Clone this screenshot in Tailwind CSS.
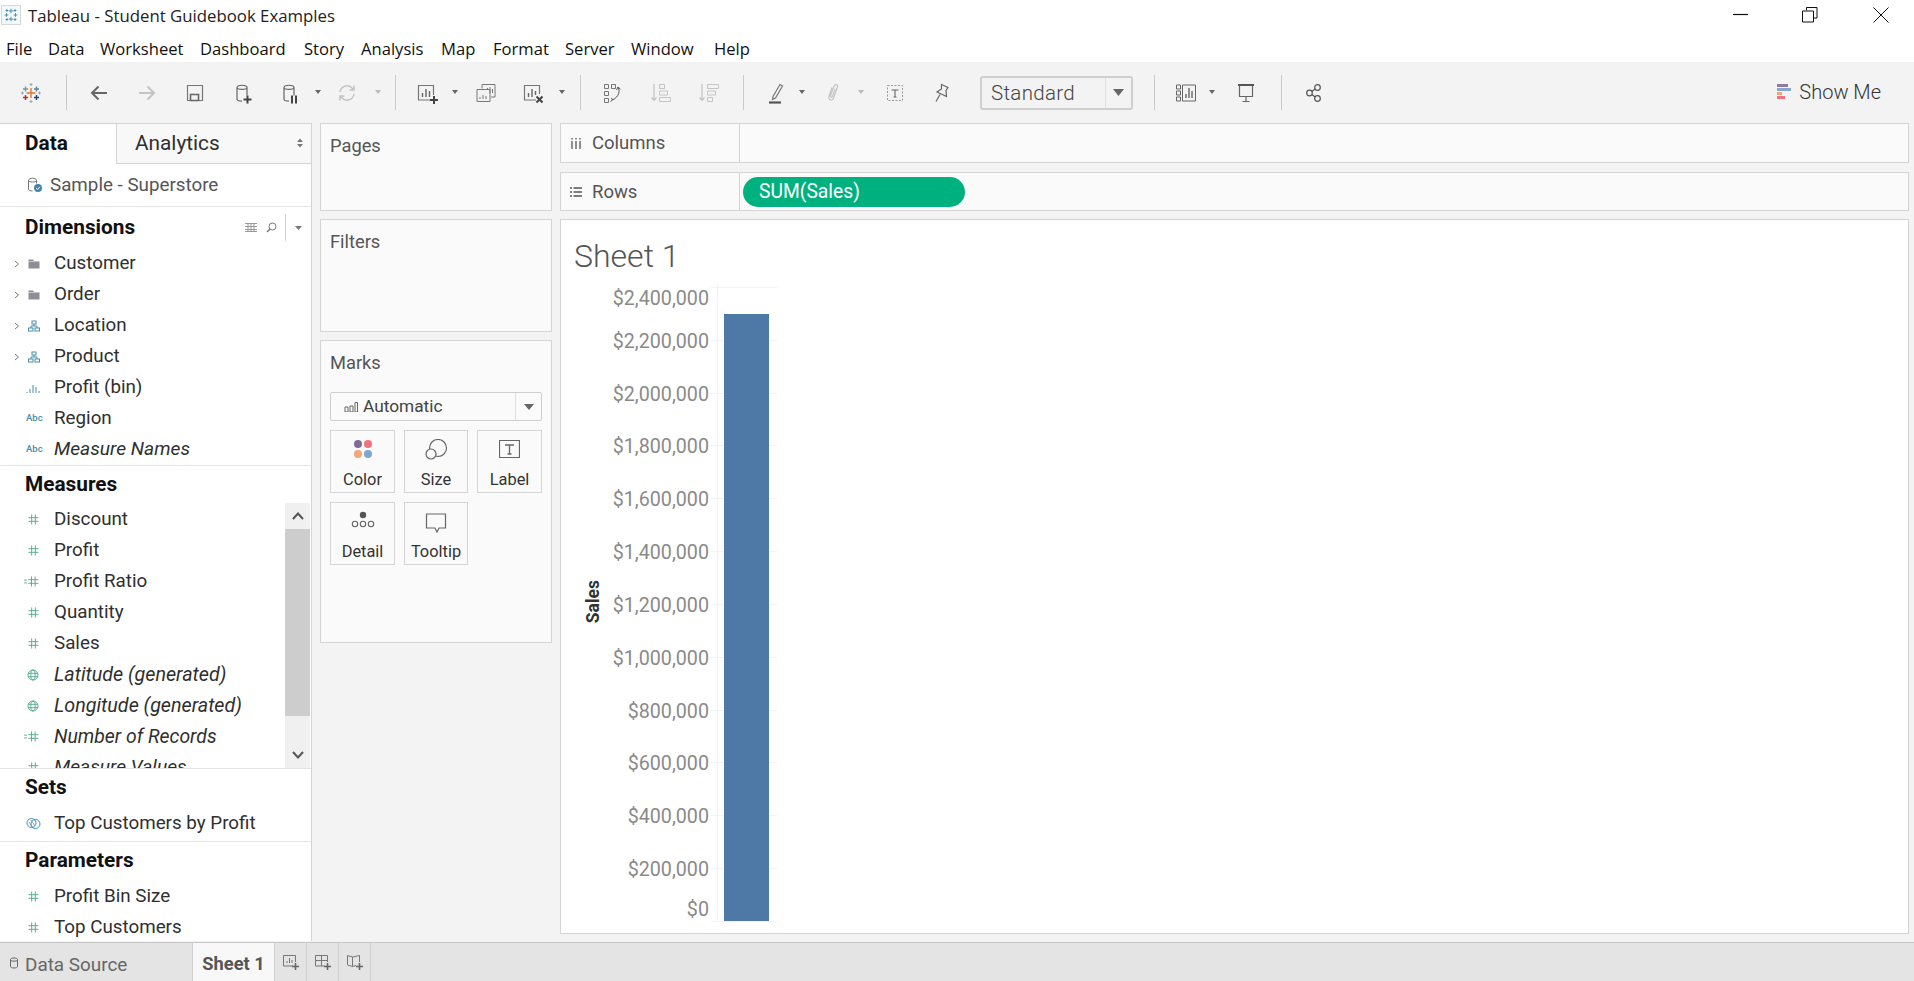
<!DOCTYPE html>
<html lang="en">
<head>
  <meta charset="UTF-8" />
  <title>Tableau - Student Guidebook Examples</title>
  <script src="https://cdn.jsdelivr.net/npm/@tailwindcss/browser@4"></script>
</head>
<body class="bg-[#f3f3f3] font-['Roboto',sans-serif] text-[#333] overflow-hidden">

  <!-- icon sprite -->
  <svg class="hidden">
    <symbol id="folder" viewBox="0 0 12 12"><path d="M.5 1.500h4.500l1 1.500h5.500v7.500H.5z" fill="#8d8f94"/><path d="M.5 3.500h11" stroke="#fff" stroke-width=".5"/></symbol>
    <symbol id="hier" viewBox="0 0 12 12"><g fill="none" stroke="#4a8ea8" stroke-width="1"><rect x="4" y="1" width="4" height="3"/><rect x=".5" y="8" width="4.500" height="3"/><rect x="7" y="8" width="4.500" height="3"/><path d="M6 4v2M3 8V6h6v2"/></g></symbol>
    <symbol id="hash" viewBox="0 0 12 12"><path d="M4 .5v11M8 .5v11M.5 4h11M.5 8h11" stroke="#4fa888" stroke-width="1" fill="none"/></symbol>
    <symbol id="hashcalc" viewBox="0 0 16 12"><path d="M8 .5v11M12 .5v11M4.500 4h11M4.500 8h11" stroke="#4fa888" stroke-width="1" fill="none"/><path d="M0 4.500h3M0 7.500h3" stroke="#4fa888" stroke-width="1"/></symbol>
    <symbol id="globe" viewBox="0 0 12 12"><g fill="none" stroke="#4fa888" stroke-width=".9"><circle cx="6" cy="6" r="5"/><ellipse cx="6" cy="6" rx="2.200" ry="5"/><path d="M1 4.300h10M1 7.700h10"/></g></symbol>
    <symbol id="chev" viewBox="0 0 6 8"><path d="M1 1l3.500 3L1 7" fill="none" stroke="#777" stroke-width="1"/></symbol>
    <symbol id="db" viewBox="0 0 24 24"><path d="M7 6.500c0-3 10-3 10 0v8M7 6.500c0 2.500 10 2.500 10 0M7 6.500V18c0 1.500 2 2.200 5 2.200" fill="none" stroke="#666" stroke-width="1.200"/></symbol>
  </svg>

  <div class="w-[1914px] h-[981px] flex flex-col">

    <!-- title bar -->
    <div class="h-[30px] bg-white flex items-center relative">
      <svg class="w-[20px] h-[20px] ml-[1px] bg-[#f3f8fb] border border-[#d7d7d7]" viewBox="0 0 20 20"><g stroke="#3f87ad" stroke-width="1" fill="none"><path d="M10 3v5M7.500 5.500h5M10 12v5M7.500 14.500h5M5 8v4M3 10h4M15 8v4M13 10h4M5.500 3.500v3M4 5h3M14.500 3.500v3M13 5h3M5.500 13.500v3M4 15h3M14.500 13.500v3M13 15h3"/></g></svg>
      <span class="ml-[7px] pt-[2px] text-[16.800px] text-[#222] font-['Open_Sans',sans-serif]">Tableau - Student Guidebook Examples</span>
      <div class="ml-auto flex items-center">
        <svg class="w-[16px] h-[16px]" viewBox="0 0 16 16"><path d="M0 7.500h15" stroke="#111" stroke-width="1.200"/></svg>
        <svg class="w-[16px] h-[16px] ml-[53px]" viewBox="0 0 16 16"><path d="M4.500 3.500V.5h10.500v10.500h-3.500M.5 4h11v11H.5z" fill="none" stroke="#111" stroke-width="1"/></svg>
        <svg class="w-[16px] h-[16px] ml-[55px] mr-[25px]" viewBox="0 0 16 16"><path d="M.5.5l15 15M15.500.5l-15 15" stroke="#111" stroke-width="1"/></svg>
      </div>
    </div>

    <!-- menu bar -->
    <div class="h-[32px] bg-white flex items-center pl-[6px] pt-[6px] text-[16.600px] text-[#111] font-['Open_Sans',sans-serif]">
      <span class="w-[42px]">File</span>
      <span class="w-[52px]">Data</span>
      <span class="w-[100px]">Worksheet</span>
      <span class="w-[104px]">Dashboard</span>
      <span class="w-[57px]">Story</span>
      <span class="w-[80px]">Analysis</span>
      <span class="w-[52px]">Map</span>
      <span class="w-[72px]">Format</span>
      <span class="w-[66px]">Server</span>
      <span class="w-[83px]">Window</span>
      <span>Help</span>
    </div>

    <!-- toolbar -->
    <div class="h-[61px] bg-[#f3f3f3] flex items-center">
      <svg class="w-[24px] h-[24px] ml-[19px]" viewBox="0 0 24 24"><g fill="none" stroke-width="1.400"><path d="M12 7v10M7.500 12h9" stroke="#e8762b"/><path d="M6.500 5.500v5M4 8h5" stroke="#7099a6"/><path d="M17.500 5.500v5M15 8h5" stroke="#59879b"/><path d="M6.500 14v5M4 16.500h5" stroke="#c72037"/><path d="M17.500 14v5M15 16.500h5" stroke="#1f447e"/><path d="M12 2v3M10.500 3.500h3M12 19v3M10.500 20.500h3M2 12h3M3.500 10.500v3M19 12h3M20.500 10.500v3" stroke="#9aa7b2" stroke-width="1"/></g></svg>
      <div class="w-px h-[35px] bg-[#c9c9c9] ml-[23px]"></div>
      <svg class="w-[24px] h-[24px] ml-[20px]" viewBox="0 0 24 24"><path d="M20 12H5M11.500 5.500L5 12l6.500 6.500" fill="none" stroke="#666" stroke-width="2"/></svg>
      <svg class="w-[24px] h-[24px] ml-[24px]" viewBox="0 0 24 24"><path d="M4 12h15M12.500 5.500L19 12l-6.500 6.500" fill="none" stroke="#c4c4c4" stroke-width="2"/></svg>
      <svg class="w-[24px] h-[24px] ml-[24px]" viewBox="0 0 24 24"><path d="M4.500 4.500h15v15h-15z" fill="none" stroke="#777" stroke-width="1.200"/><path d="M7.500 13.500h8v6h-8z" fill="none" stroke="#666" stroke-width="1.600"/></svg>
      <svg class="w-[24px] h-[24px] ml-[23px]" viewBox="0 0 24 24"><use href="#db"/><path d="M13.500 18.500h8M17.500 14.500v8" stroke="#444" stroke-width="2"/></svg>
      <svg class="w-[24px] h-[24px] ml-[23px]" viewBox="0 0 24 24"><use href="#db"/><path d="M15 14.500v8M19 14.500v8" stroke="#444" stroke-width="2"/></svg>
      <svg class="w-[8px] h-[5px] ml-[13px]" viewBox="0 0 8 5"><path d="M1 0h6L4 4z" fill="#666"/></svg>
      <svg class="w-[24px] h-[24px] ml-[13px]" viewBox="0 0 24 24"><path d="M5 11a7 7 0 0 1 12-4l2 2M19 13a7 7 0 0 1-12 4l-2-2M19 4.500v4.500h-4.500M5 19.500V15h4.500" fill="none" stroke="#c4c4c4" stroke-width="1.500"/></svg>
      <svg class="w-[8px] h-[5px] ml-[15px]" viewBox="0 0 8 5"><path d="M1 0h6L4 4z" fill="#bbb"/></svg>
      <div class="w-px h-[35px] bg-[#c9c9c9] ml-[13px]"></div>
      <svg class="w-[24px] h-[24px] ml-[19px]" viewBox="0 0 24 24"><path d="M15 19H3.500V4.500h15V14" fill="none" stroke="#777" stroke-width="1.200"/><path d="M7.500 16v-4M11 16V8M14.500 16v-6" stroke="#666" stroke-width="1.400"/><path d="M15 19h8M19 15v8" stroke="#444" stroke-width="2"/></svg>
      <svg class="w-[8px] h-[5px] ml-[12px]" viewBox="0 0 8 5"><path d="M1 0h6L4 4z" fill="#666"/></svg>
      <svg class="w-[24px] h-[24px] ml-[15px]" viewBox="0 0 24 24"><path d="M8 7.500V3.500h13v12.500h-4" fill="none" stroke="#777" stroke-width="1"/><path d="M3 8.500h13v12H3z" fill="#f3f3f3" stroke="#777" stroke-width="1"/><path d="M6 18v-2M9 18v-4M12 18v-3M13.500 8v-1M16 12V6M18.500 12V8" stroke="#777" stroke-width="1"/></svg>
      <svg class="w-[24px] h-[24px] ml-[23px]" viewBox="0 0 24 24"><path d="M15 19H3.500V4.500h15V13" fill="none" stroke="#777" stroke-width="1.200"/><path d="M7.500 16v-4M11 16V8M14.500 14v-4" stroke="#666" stroke-width="1.400"/><path d="M15.500 15.500l6 6M21.500 15.500l-6 6" stroke="#444" stroke-width="2"/></svg>
      <svg class="w-[8px] h-[5px] ml-[13px]" viewBox="0 0 8 5"><path d="M1 0h6L4 4z" fill="#666"/></svg>
      <div class="w-px h-[35px] bg-[#c9c9c9] ml-[14px]"></div>
      <svg class="w-[24px] h-[24px] ml-[19px]" viewBox="0 0 24 24"><g fill="none" stroke="#777" stroke-width="1"><path d="M4.500 3.500h4v4h-4zM11.500 3.500h4v4h-4zM4.500 10.500h4v4h-4zM4.500 17.500h4v4h-4z"/><path d="M18 6.500c2 3 1.500 9-5.500 12.500M16.500 9l1.500-3 2.500 2.200M11.500 17l1 2-2 1.500" stroke="#555"/></g></svg>
      <svg class="w-[24px] h-[24px] ml-[25px]" viewBox="0 0 24 24"><g fill="none" stroke="#c4c4c4" stroke-width="1"><path d="M5 3v16M2.500 16.500L5 19.500l2.500-3" stroke-width="1.200"/><path d="M10.500 3.500h5v4h-5zM10.500 10h8v4h-8zM10.500 16.500h11v4h-11z"/></g></svg>
      <svg class="w-[24px] h-[24px] ml-[24px]" viewBox="0 0 24 24"><g fill="none" stroke="#c4c4c4" stroke-width="1"><path d="M5 3v16M2.500 16.500L5 19.500l2.500-3" stroke-width="1.200"/><path d="M10.500 3.500h11v4h-11zM10.500 10h8v4h-8zM10.500 16.500h5v4h-5z"/></g></svg>
      <div class="w-px h-[35px] bg-[#c9c9c9] ml-[22px]"></div>
      <svg class="w-[24px] h-[24px] ml-[19px]" viewBox="0 0 24 24"><path d="M10 15.500l7-12 2.500 1.500-7 12-3 1.500z" fill="none" stroke="#777" stroke-width="1.200"/><path d="M6 21.500h12" stroke="#555" stroke-width="2.200"/></svg>
      <svg class="w-[8px] h-[5px] ml-[11px]" viewBox="0 0 8 5"><path d="M1 0h6L4 4z" fill="#666"/></svg>
      <svg class="w-[24px] h-[24px] ml-[16px]" viewBox="0 0 24 24"><path d="M10 6.500l-3 9c-1 3.500 3.500 5 4.500 1.500l4-11c.8-2.500-2.500-3.500-3.500-1l-3.500 10c-.4 1.300 1.300 1.800 1.800.6l3-8" fill="none" stroke="#c4c4c4" stroke-width="1.200"/></svg>
      <svg class="w-[8px] h-[5px] ml-[11px]" viewBox="0 0 8 5"><path d="M1 0h6L4 4z" fill="#bbb"/></svg>
      <svg class="w-[24px] h-[24px] ml-[18px]" viewBox="0 0 24 24"><path d="M4.500 4.500h15v15h-15z" fill="none" stroke="#999" stroke-width="1" stroke-dasharray="2 1.500"/><path d="M8.500 9h7M12 9v7M10.500 16h3" fill="none" stroke="#666" stroke-width="1.100"/></svg>
      <svg class="w-[24px] h-[24px] ml-[22px]" viewBox="0 0 24 24"><path d="M12.500 3.500L19 6.500l-2 3 .5 6L8 11l4.500-3zM11 13.500l-4 7" fill="none" stroke="#666" stroke-width="1.200"/></svg>
      <div class="w-[153px] h-[34px] ml-[27px] border-2 border-[#cfcfcf] rounded-[3px] flex items-center">
        <span class="flex-1 pl-[9px] pt-[2px] text-[20.500px] text-[#444] font-light tracking-[0.3px]">Standard</span>
        <div class="w-[26px] h-full border-l border-[#dedede] flex items-center justify-center">
          <svg class="w-[11px] h-[7px]" viewBox="0 0 11 7"><path d="M0 0h11L5.500 7z" fill="#666"/></svg>
        </div>
      </div>
      <div class="w-px h-[35px] bg-[#c9c9c9] ml-[21px]"></div>
      <svg class="w-[24px] h-[24px] ml-[19px]" viewBox="0 0 24 24"><g fill="none" stroke="#666" stroke-width="1"><path d="M2.500 4h4v4h-4zM2.500 10h4v4h-4zM2.500 16h4v4h-4zM8.500 4h13v16h-13z"/><path d="M12 17v-4M15 17V7M18 17v-7" stroke-width="1.400"/></g></svg>
      <svg class="w-[8px] h-[5px] ml-[10px]" viewBox="0 0 8 5"><path d="M1 0h6L4 4z" fill="#666"/></svg>
      <svg class="w-[24px] h-[24px] ml-[18px]" viewBox="0 0 24 24"><path d="M4 4h16" stroke="#555" stroke-width="2"/><path d="M5.500 4.500v11h13v-11M12 15.500v5M8.500 20.500h7" fill="none" stroke="#666" stroke-width="1.200"/></svg>
      <div class="w-px h-[35px] bg-[#c9c9c9] ml-[23px]"></div>
      <svg class="w-[24px] h-[24px] ml-[20px]" viewBox="0 0 24 24"><g fill="none" stroke="#555" stroke-width="1.200"><circle cx="7.500" cy="12" r="2.800"/><circle cx="15.500" cy="6.500" r="2.800"/><circle cx="15.500" cy="17.500" r="2.800"/><path d="M9.800 10.400l3.400-2.400M9.800 13.600l3.400 2.400"/></g></svg>
      <div class="ml-auto mr-[33px] flex items-center -translate-y-px">
        <svg class="w-[15px] h-[16px]" viewBox="0 0 15 16"><rect width="11" height="3" fill="#8c7a9f"/><rect y="4" width="14" height="3" fill="#86a8cd"/><rect y="8" width="5" height="3" fill="#f2a777"/><rect y="12" width="8" height="3" fill="#f2717f"/></svg>
        <span class="ml-[7px] text-[20px] text-[#333] font-light">Show Me</span>
      </div>
    </div>

    <!-- main area -->
    <div class="flex-1 flex min-h-0">

      <!-- data pane -->
      <aside class="w-[312px] bg-white border-r border-t border-[#d4d4d4] flex flex-col text-[18.800px] text-[#2f2f2f]">
        <div class="h-[40px] flex">
          <div class="w-[116px] pl-[25px] flex items-center font-bold text-[#111] text-[20.800px]">Data</div>
          <div class="flex-1 bg-[#f8f8f8] border-l border-b border-[#d4d4d4] flex items-center pl-[18px] text-[20.800px] relative">Analytics
            <svg class="absolute right-[8px] top-[14px] w-[6px] h-[10px]" viewBox="0 0 6 10"><path d="M0 4l3-3.500L6 4zM0 6l3 3.500L6 6z" fill="#777"/></svg>
          </div>
        </div>
        <div class="h-[43px] border-b border-[#e3e3e3] flex items-center">
          <svg class="ml-[27px] w-[16px] h-[16px]" viewBox="0 0 16 16"><path d="M1.500 3.500c0-3 8-3 8 0v3M1.500 3.500c0 2 8 2 8 0M1.500 3.500V12c0 1.500 2 2 4 2" fill="none" stroke="#777" stroke-width="1"/><circle cx="11" cy="11" r="4" fill="#3f87ad"/><path d="M9 11l1.500 1.500L13 9.800" fill="none" stroke="#fff" stroke-width="1"/></svg>
          <span class="ml-[7px] text-[#555]">Sample - Superstore</span>
        </div>

        <div class="h-[41px] flex items-center pl-[25px] font-bold text-[#111] text-[20.800px]">
          Dimensions
          <svg class="ml-auto w-[12px] h-[9px]" viewBox="0 0 12 9"><path d="M0 .5h12M0 3.500h12M0 6.500h12M0 8.500h12M3 0v9M6 0v9M9 0v9" stroke="#999" stroke-width="1"/></svg>
          <svg class="ml-[9px] w-[11px] h-[11px]" viewBox="0 0 11 11"><circle cx="6.500" cy="4.500" r="3.500" fill="none" stroke="#777" stroke-width="1"/><path d="M4 7L1 10" stroke="#777" stroke-width="1.400"/></svg>
          <div class="w-px h-[27px] bg-[#d4d4d4] ml-[8px]"></div>
          <svg class="ml-[9px] mr-[9px] w-[7px] h-[4px]" viewBox="0 0 7 4"><path d="M0 0h7L3.500 4z" fill="#777"/></svg>
        </div>
        <div class="h-[31px] flex items-center"><svg class="ml-[14px] w-[6px] h-[8px]"><use href="#chev"/></svg><svg class="ml-[8px] w-[12px] h-[12px]"><use href="#folder"/></svg><span class="ml-[14px]">Customer</span></div>
        <div class="h-[31px] flex items-center"><svg class="ml-[14px] w-[6px] h-[8px]"><use href="#chev"/></svg><svg class="ml-[8px] w-[12px] h-[12px]"><use href="#folder"/></svg><span class="ml-[14px]">Order</span></div>
        <div class="h-[31px] flex items-center"><svg class="ml-[14px] w-[6px] h-[8px]"><use href="#chev"/></svg><svg class="ml-[8px] w-[12px] h-[12px]"><use href="#hier"/></svg><span class="ml-[14px]">Location</span></div>
        <div class="h-[31px] flex items-center"><svg class="ml-[14px] w-[6px] h-[8px]"><use href="#chev"/></svg><svg class="ml-[8px] w-[12px] h-[12px]"><use href="#hier"/></svg><span class="ml-[14px]">Product</span></div>
        <div class="h-[31px] flex items-center"><svg class="ml-[26px] w-[15px] h-[10px]" viewBox="0 0 15 10"><path d="M1 9v1M4 6v4M7 2v8M10 4v6M13 8v2" stroke="#4a8ea8" stroke-width="1"/></svg><span class="ml-[13px]">Profit (bin)</span></div>
        <div class="h-[31px] flex items-center"><span class="ml-[26px] w-[17px] text-[9.500px] font-medium text-[#4a8ea8]">Abc</span><span class="ml-[11px]">Region</span></div>
        <div class="h-[31px] flex items-center"><span class="ml-[26px] w-[17px] text-[9.500px] font-medium text-[#4a8ea8]">Abc</span><span class="ml-[11px] italic text-[19.200px]">Measure Names</span></div>
        <div class="h-px bg-[#e3e3e3]"></div>

        <div class="h-[37px] flex items-center pl-[25px] font-bold text-[#111] text-[20.800px]">Measures</div>
        <div class="h-[265px] flex overflow-hidden">
          <div class="flex-1 pt-px">
            <div class="h-[31px] flex items-center"><svg class="ml-[28px] w-[11px] h-[11px]"><use href="#hash"/></svg><span class="ml-[15px]">Discount</span></div>
            <div class="h-[31px] flex items-center"><svg class="ml-[28px] w-[11px] h-[11px]"><use href="#hash"/></svg><span class="ml-[15px]">Profit</span></div>
            <div class="h-[31px] flex items-center"><svg class="ml-[24px] w-[15px] h-[11px]"><use href="#hashcalc"/></svg><span class="ml-[15px]">Profit Ratio</span></div>
            <div class="h-[31px] flex items-center"><svg class="ml-[28px] w-[11px] h-[11px]"><use href="#hash"/></svg><span class="ml-[15px]">Quantity</span></div>
            <div class="h-[31px] flex items-center"><svg class="ml-[28px] w-[11px] h-[11px]"><use href="#hash"/></svg><span class="ml-[15px]">Sales</span></div>
            <div class="h-[31px] flex items-center"><svg class="ml-[27px] w-[12px] h-[12px]"><use href="#globe"/></svg><span class="ml-[15px] italic text-[19.700px]">Latitude (generated)</span></div>
            <div class="h-[31px] flex items-center"><svg class="ml-[27px] w-[12px] h-[12px]"><use href="#globe"/></svg><span class="ml-[15px] italic text-[19.700px]">Longitude (generated)</span></div>
            <div class="h-[31px] flex items-center"><svg class="ml-[24px] w-[15px] h-[11px]"><use href="#hashcalc"/></svg><span class="ml-[15px] italic text-[19.400px]">Number of Records</span></div>
            <div class="h-[31px] flex items-center"><svg class="ml-[28px] w-[11px] h-[11px]"><use href="#hash"/></svg><span class="ml-[15px] italic text-[19.200px]">Measure Values</span></div>
          </div>
          <div class="w-[25px] bg-[#f0f0f0] flex flex-col mr-px">
            <div class="h-[26px] flex items-center justify-center"><svg class="w-[12px] h-[8px]" viewBox="0 0 12 8"><path d="M1 7l5-5.500L11 7" fill="none" stroke="#555" stroke-width="2"/></svg></div>
            <div class="h-[187px] bg-[#cdcdcd]"></div>
            <div class="flex-1 flex items-center justify-center pt-[25px]"><svg class="w-[12px] h-[8px]" viewBox="0 0 12 8"><path d="M1 1l5 5.500L11 1" fill="none" stroke="#555" stroke-width="2"/></svg></div>
          </div>
        </div>
        <div class="h-px bg-[#e3e3e3]"></div>

        <div class="h-[37px] flex items-center pl-[25px] font-bold text-[#111] text-[20.800px]">Sets</div>
        <div class="h-[31px] flex items-center pt-[3px]"><svg class="ml-[26px] w-[15px] h-[13px]" viewBox="0 0 15 13"><g fill="none" stroke="#4a8ea8" stroke-width="1"><circle cx="5.500" cy="6" r="4.500"/><circle cx="9.500" cy="7" r="4.500"/><path d="M5 3l4 6M3 5l4 6" stroke-width=".7"/></g></svg><span class="ml-[13px]">Top Customers by Profit</span></div>
        <div class="h-px bg-[#e3e3e3] mt-[4px]"></div>

        <div class="h-[37px] flex items-center pl-[25px] font-bold text-[#111] text-[20.800px]">Parameters</div>
        <div class="h-[31px] flex items-center pt-[3px]"><svg class="ml-[28px] w-[11px] h-[11px]"><use href="#hash"/></svg><span class="ml-[15px]">Profit Bin Size</span></div>
        <div class="h-[31px] flex items-center pt-[3px]"><svg class="ml-[28px] w-[11px] h-[11px]"><use href="#hash"/></svg><span class="ml-[15px]">Top Customers</span></div>
      </aside>

      <!-- shelves -->
      <div class="w-[232px] ml-[8px] flex flex-col text-[18.300px] text-[#555]">
        <div class="h-[88px] bg-[#fafafa] border border-[#d4d4d4] px-[9px] pt-[8px]">Pages</div>
        <div class="h-[113px] mt-[8px] bg-[#fafafa] border border-[#d4d4d4] px-[9px] pt-[8px]">Filters</div>
        <div class="h-[303px] mt-[8px] bg-[#fafafa] border border-[#d4d4d4] px-[9px] pt-[8px]">
          <div class="h-[28px]">Marks</div>
          <div class="h-[29px] mt-[15px] border border-[#cfcfcf] rounded-[2px] flex items-center text-[17.300px] text-[#444]">
            <svg class="ml-[13px] w-[14px] h-[10px]" viewBox="0 0 14 10"><path d="M1 5h3v5H1zM6 4h3v6H6zM11 .5h2.500V10H11z" fill="none" stroke="#666" stroke-width="1"/></svg>
            <span class="ml-[5px] flex-1">Automatic</span>
            <div class="w-[26px] h-full border-l border-[#dedede] flex items-center justify-center"><svg class="w-[10px] h-[6px]" viewBox="0 0 10 6"><path d="M0 0h10L5 6z" fill="#666"/></svg></div>
          </div>
          <div class="grid grid-cols-[65px_64px_65px] gap-x-[9px] gap-y-[9px] mt-[9px] text-[16.400px] leading-[18px] text-[#333]">
            <div class="h-[63px] border border-[#d4d4d4] flex flex-col items-center pt-[8px]">
              <svg class="w-[20px] h-[20px]" viewBox="0 0 20 20"><circle cx="5" cy="5" r="4" fill="#7e6b9a"/><circle cx="15" cy="5" r="4" fill="#f2717f"/><circle cx="5" cy="15" r="4" fill="#f2a777"/><circle cx="15" cy="15" r="4" fill="#7ea6d0"/></svg>
              <span class="mt-[12px]">Color</span>
            </div>
            <div class="h-[63px] border border-[#d4d4d4] flex flex-col items-center pt-[8px]">
              <svg class="w-[23px] h-[21px]" viewBox="0 0 23 21"><circle cx="13" cy="9" r="8.500" fill="none" stroke="#666" stroke-width="1.200"/><circle cx="6" cy="15" r="5" fill="#fafafa" stroke="#666" stroke-width="1.200"/></svg>
              <span class="mt-[11px]">Size</span>
            </div>
            <div class="h-[63px] border border-[#d4d4d4] flex flex-col items-center pt-[9px]">
              <svg class="w-[21px] h-[19px]" viewBox="0 0 21 19"><path d="M.5.500h20v17H.5z" fill="none" stroke="#666" stroke-width="1.200"/><path d="M6 5h9M10.500 5v9M8.500 14h4" fill="none" stroke="#666" stroke-width="1.300"/></svg>
              <span class="mt-[12px]">Label</span>
            </div>
            <div class="h-[63px] border border-[#d4d4d4] flex flex-col items-center pt-[8px]">
              <svg class="w-[24px] h-[18px]" viewBox="0 0 24 18"><circle cx="12" cy="4" r="3.200" fill="#555"/><g fill="none" stroke="#666" stroke-width="1.100"><circle cx="4" cy="13" r="2.700"/><circle cx="12" cy="13" r="2.700"/><circle cx="20" cy="13" r="2.700"/></g></svg>
              <span class="mt-[14px]">Detail</span>
            </div>
            <div class="h-[63px] border border-[#d4d4d4] flex flex-col items-center pt-[10px]">
              <svg class="w-[22px] h-[20px]" viewBox="0 0 22 20"><path d="M1.500 1h19v14h-6.500l-2 4-2-4H1.500z" fill="none" stroke="#666" stroke-width="1.200"/></svg>
              <span class="mt-[10px]">Tooltip</span>
            </div>
          </div>
        </div>
      </div>

      <!-- shelves + view -->
      <div class="w-[1349px] ml-[8px] flex flex-col text-[18.500px] text-[#555]">
        <div class="h-[40px] bg-[#fafafa] border border-[#d4d4d4] flex">
          <div class="w-[179px] border-r border-[#d4d4d4] flex items-center pl-[10px]">
            <svg class="w-[10px] h-[11px]" viewBox="0 0 10 11"><path d="M1 3v8M5 3v8M9 3v8M1 0v1.500M5 0v1.500M9 0v1.500" stroke="#555" stroke-width="1.300"/></svg>
            <span class="ml-[11px] pt-[2px]">Columns</span>
          </div>
        </div>
        <div class="h-[39px] mt-[9px] bg-[#fafafa] border border-[#d4d4d4] flex">
          <div class="w-[179px] border-r border-[#d4d4d4] flex items-center pl-[9px]">
            <svg class="w-[12px] h-[10px]" viewBox="0 0 12 10"><path d="M0 1h2M0 5h2M0 9h2M3.500 1H12M3.500 5H12M3.500 9H12" stroke="#555" stroke-width="1.300"/></svg>
            <span class="ml-[10px] pt-[2px]">Rows</span>
          </div>
          <div class="flex items-center pl-[3px]">
            <div class="w-[222px] h-[30px] rounded-full bg-[#00b180] text-white flex items-center pl-[16px] pt-[2px] text-[19.300px]">SUM(Sales)</div>
          </div>
        </div>

        <!-- view -->
        <div class="h-[715px] mt-[8px] bg-white border border-[#d4d4d4] flex flex-col">
          <div class="h-[34px] mt-[19px] mb-px pl-[13px] text-[32px] font-light leading-[34px] text-[#555]">Sheet 1</div>
          <div class="flex h-[638px] mt-[9px]">
            <div class="ml-[20px] w-[24px] flex items-center justify-center">
              <span class="[writing-mode:vertical-rl] rotate-180 font-bold text-[17.500px] text-[#333]">Sales</span>
            </div>
            <div class="w-[103px] pt-[6px] text-right text-[19.700px] text-[#8a8a8a] leading-[0px] translate-x-px">
              <div class="h-[52.830px] translate-y-[10px]">$2,400,000</div>
              <div class="h-[52.830px]">$2,200,000</div>
              <div class="h-[52.830px]">$2,000,000</div>
              <div class="h-[52.830px]">$1,800,000</div>
              <div class="h-[52.830px]">$1,600,000</div>
              <div class="h-[52.830px]">$1,400,000</div>
              <div class="h-[52.830px]">$1,200,000</div>
              <div class="h-[52.830px]">$1,000,000</div>
              <div class="h-[52.830px]">$800,000</div>
              <div class="h-[52.830px]">$600,000</div>
              <div class="h-[52.830px]">$400,000</div>
              <div class="h-[52.830px]">$200,000</div>
              <div class="-translate-y-[13px]">$0</div>
            </div>
            <div class="relative w-[66px] ml-[3px] pt-[4px]">
              <div class="h-[52.830px] border-t border-[#f3f3f3]"></div>
              <div class="h-[52.830px] border-t border-[#f3f3f3]"></div>
              <div class="h-[52.830px] border-t border-[#f3f3f3]"></div>
              <div class="h-[52.830px] border-t border-[#f3f3f3]"></div>
              <div class="h-[52.830px] border-t border-[#f3f3f3]"></div>
              <div class="h-[52.830px] border-t border-[#f3f3f3]"></div>
              <div class="h-[52.830px] border-t border-[#f3f3f3]"></div>
              <div class="h-[52.830px] border-t border-[#f3f3f3]"></div>
              <div class="h-[52.830px] border-t border-[#f3f3f3]"></div>
              <div class="h-[52.830px] border-t border-[#f3f3f3]"></div>
              <div class="h-[52.830px] border-t border-[#f3f3f3]"></div>
              <div class="h-[52.830px] border-t border-[#f3f3f3]"></div>
              <div class="h-px bg-[#f3f3f3]"></div>
              <div class="absolute left-[6px] top-0 bottom-0 w-px bg-[#f3f3f3]"></div>
              <div class="absolute left-[13px] w-[45px] top-[31px] bottom-0 bg-[#4e79a7]"></div>
            </div>
          </div>
        </div>
      </div>
    </div>

    <!-- sheet tabs -->
    <div class="h-[39px] mt-px bg-[#e4e4e4] border-t border-[#c8c8c8] flex text-[18.900px]">
      <div class="w-[193px] flex items-center border-r border-[#d0d0d0] text-[#666] pt-[7px]">
        <svg class="ml-[10px] w-[8px] h-[12px] -translate-y-[3px]" viewBox="0 0 8 12"><path d="M.5 2.500c0-2 7-2 7 0v7c0 2-7 2-7 0zM.5 3c0 1.500 7 1.500 7 0" fill="none" stroke="#666" stroke-width="1"/></svg>
        <span class="ml-[7px]">Data Source</span>
      </div>
      <div class="w-[82px] bg-[#f8f8f8] border-r border-[#d0d0d0] flex items-center justify-center font-bold text-[#555] text-[18.300px] pt-[4px]">Sheet 1</div>
      <div class="w-[32px] border-r border-[#d0d0d0] flex items-center justify-center">
        <svg class="w-[16px] h-[16px]" viewBox="0 0 16 16"><path d="M10 12H.5V1.500h12V8" fill="none" stroke="#777" stroke-width="1"/><path d="M4 9V7M6.500 9V4M9 9V6" stroke="#777" stroke-width="1"/><path d="M9 12.500h7M12.500 9v7" stroke="#666" stroke-width="1.600"/></svg>
      </div>
      <div class="w-[32px] border-r border-[#d0d0d0] flex items-center justify-center">
        <svg class="w-[16px] h-[16px]" viewBox="0 0 16 16"><path d="M10 12H.5V1.500h12V8M.5 6.500h12M6.500 1.500V12" fill="none" stroke="#777" stroke-width="1"/><path d="M9 12.500h7M12.500 9v7" stroke="#666" stroke-width="1.600"/></svg>
      </div>
      <div class="w-[32px] border-r border-[#d0d0d0] flex items-center justify-center">
        <svg class="w-[16px] h-[16px]" viewBox="0 0 16 16"><path d="M9 11.500l-3.500 1-5-1.500V1.500l5 1.500 7-1.500V8M5.500 3v9.500" fill="none" stroke="#777" stroke-width="1"/><path d="M9 12.500h7M12.500 9v7" stroke="#666" stroke-width="1.600"/></svg>
      </div>
    </div>
  </div>
</body>
</html>
